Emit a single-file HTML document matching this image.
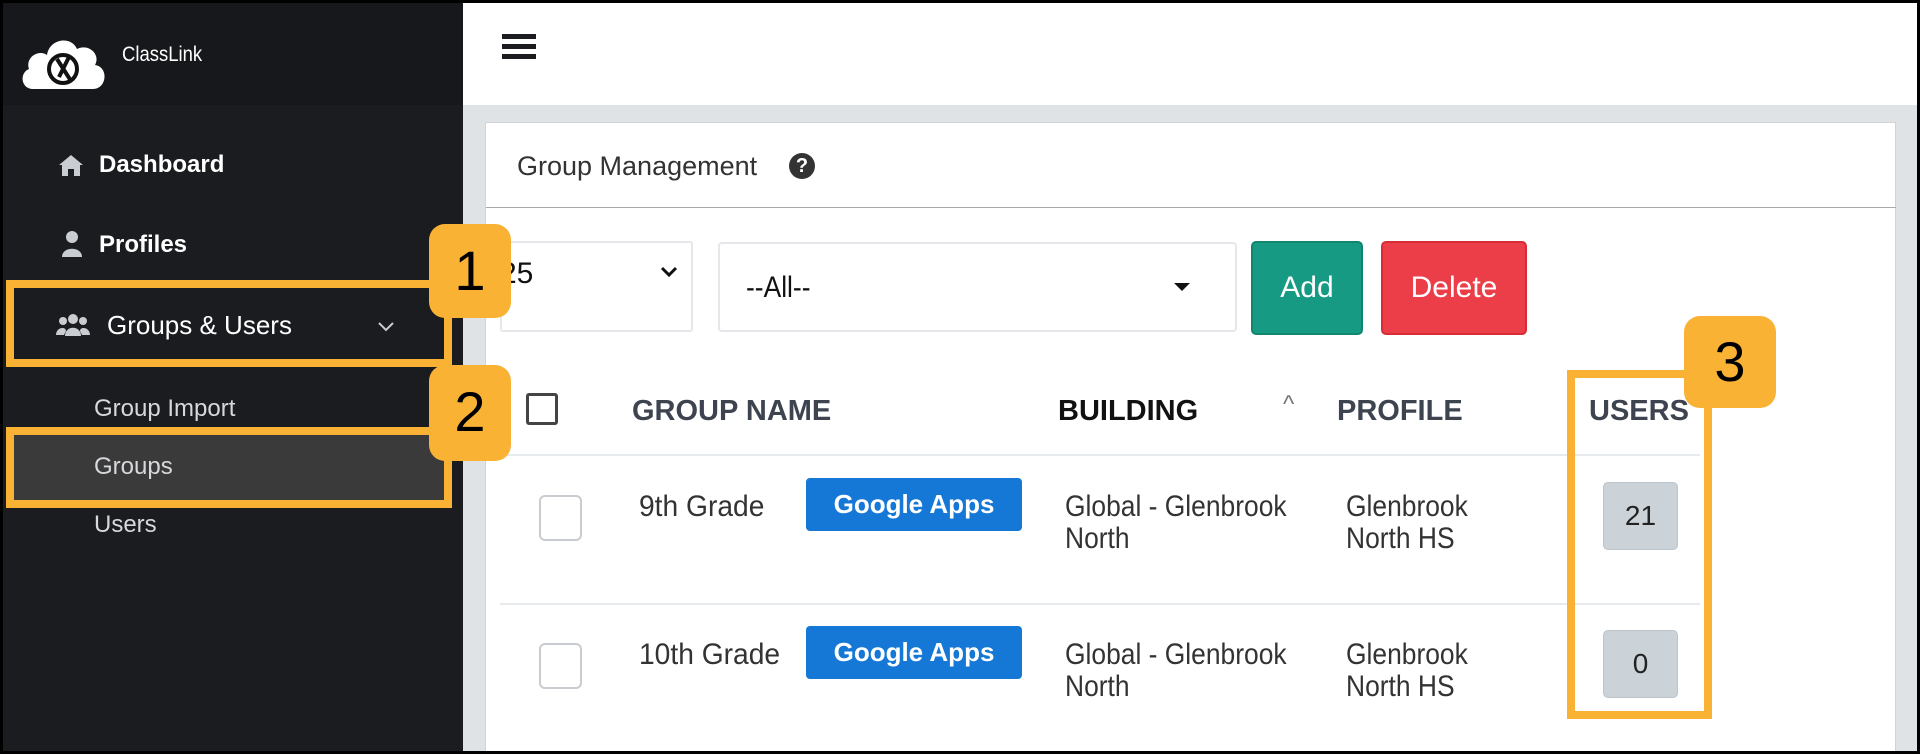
<!DOCTYPE html>
<html><head><meta charset="utf-8"><style>
*{margin:0;padding:0;box-sizing:border-box}
body{width:1920px;height:754px;overflow:hidden;background:#000;font-family:"Liberation Sans",sans-serif;position:relative}
.a{position:absolute}
.n{transform:scaleX(0.88);transform-origin:left top;white-space:nowrap}
#frame{position:absolute;left:3px;top:3px;width:1914px;height:748px;background:#dfe3e6;overflow:hidden}
.side{left:0;top:0;width:460px;height:748px;background:#1b1c20}
.logo{left:0;top:0;width:460px;height:102px;background:#17181c}
.nav{color:#fff;font-size:24px;font-weight:bold}
.sub{color:#d6d8dc;font-size:24px}
.lbl{background:#f9b233;border-radius:16px;color:#000;font-size:56px;text-align:center;line-height:94px}
.ob{border:8px solid #f9b233}
.th{color:#3d4450;font-size:29px;font-weight:bold;white-space:nowrap}
.cb{border:2px solid #c8ccd0;border-radius:6px;background:#fff}
.ga{background:#1578d6;color:#fff;font-size:26px;font-weight:bold;border-radius:4px;text-align:center;line-height:52px}
.tx{color:#333;font-size:30px;line-height:32px}
.ub{background:#ccd3d8;border:1px solid #bcc4ca;border-radius:5px;color:#222;font-size:26px;text-align:center}
</style></head><body>
<div id="frame">
<div class="a" style="left:460px;top:0;width:1460px;height:102px;background:#fff"></div>
<div class="a side"></div>
<div class="a logo"></div>
<svg class="a" style="left:16px;top:28px" width="92" height="62" viewBox="0 0 92 62"><path d="M14 58 C2 58 0 42 10 38 C6 26 20 18 28 24 C30 8 52 4 58 18 C70 12 82 24 76 34 C90 36 88 58 74 58 Z" fill="#fff"/><circle cx="44" cy="38" r="14" fill="none" stroke="#111" stroke-width="4"/><path d="M38 28 L52 50 M50 26 L40 46" stroke="#111" stroke-width="4"/></svg>
<div class="a n" style="left:119px;top:40px;color:#fff;font-size:21px">ClassLink</div>
<svg class="a" style="left:55px;top:150px" width="26" height="24" viewBox="0 0 26 24"><path d="M13 2 L1 12 L4 12 L4 23 L10 23 L10 16 L16 16 L16 23 L22 23 L22 12 L25 12 Z" fill="#c9ccd1"/></svg>
<div class="a nav" style="left:96px;top:148px">Dashboard</div>
<svg class="a" style="left:58px;top:227px" width="22" height="28" viewBox="0 0 22 28"><circle cx="11" cy="7" r="6" fill="#c9ccd1"/><path d="M1 27 C1 16 21 16 21 27 Z" fill="#c9ccd1"/></svg>
<div class="a nav" style="left:96px;top:228px">Profiles</div>
<div class="a ob" style="left:3px;top:277px;width:446px;height:87px"></div>
<svg class="a" style="left:53px;top:310px" width="34" height="24" viewBox="0 0 34 24"><circle cx="17" cy="6" r="5" fill="#c9ccd1"/><circle cx="7" cy="8" r="4" fill="#c9ccd1"/><circle cx="27" cy="8" r="4" fill="#c9ccd1"/><path d="M9 23 C9 12 25 12 25 23Z M0 22 C0 14 10 13 10 18 L8 22Z M34 22 C34 14 24 13 24 18 L26 22Z" fill="#c9ccd1"/></svg>
<div class="a" style="left:104px;top:307px;color:#fff;font-size:26px">Groups &amp; Users</div>
<svg class="a" style="left:374px;top:318px" width="18" height="12" viewBox="0 0 18 12"><path d="M2 2 L9 9 L16 2" stroke="#c9ccd1" stroke-width="2" fill="none"/></svg>
<div class="a sub" style="left:91px;top:392px">Group Import</div>
<div class="a ob" style="left:3px;top:424px;width:446px;height:81px;background:#3a3a3a"></div>
<div class="a sub" style="left:91px;top:450px">Groups</div>
<div class="a sub" style="left:91px;top:508px">Users</div>
<div class="a" style="left:499px;top:31px;width:34px;height:5px;background:#1b1c20;box-shadow:0 10px 0 #1b1c20,0 20px 0 #1b1c20"></div>
<div class="a" style="left:482px;top:119px;width:1411px;height:640px;background:#fff;border:1px solid #d0d4d8"></div>
<div class="a" style="left:483px;top:204px;width:1410px;height:1px;background:#aaa"></div>
<div class="a" style="left:514px;top:148px;color:#333;font-size:27px">Group Management</div>
<div class="a" style="left:786px;top:150px;width:26px;height:26px;border-radius:50%;background:#333;color:#fff;font-size:20px;font-weight:bold;text-align:center;line-height:26px">?</div>
<div class="a" style="left:497px;top:238px;width:193px;height:91px;border:2px solid #e5e7ea;border-radius:3px"></div>
<div class="a" style="left:497px;top:254px;font-size:30px;color:#111">25</div>
<svg class="a" style="left:656px;top:262px" width="20" height="14" viewBox="0 0 20 14"><path d="M3 3 L10 10 L17 3" stroke="#111" stroke-width="3" fill="none"/></svg>
<div class="a" style="left:715px;top:239px;width:519px;height:90px;border:2px solid #e5e7ea;border-radius:4px"></div>
<div class="a n" style="left:743px;top:268px;font-size:30px;color:#111">--All--</div>
<svg class="a" style="left:1169px;top:278px" width="20" height="12" viewBox="0 0 20 12"><path d="M2 2 L18 2 L10 10Z" fill="#111"/></svg>
<div class="a" style="left:1248px;top:238px;width:112px;height:94px;background:#179a84;border:2px solid #128470;border-radius:5px;color:#fff;font-size:30px;text-align:center;line-height:90px">Add</div>
<div class="a" style="left:1378px;top:238px;width:146px;height:94px;background:#ec3e48;border:2px solid #d72c36;border-radius:5px;color:#fff;font-size:30px;text-align:center;line-height:90px">Delete</div>
<div class="a" style="left:523px;top:390px;width:32px;height:32px;border:3px solid #444;border-radius:3px"></div>
<div class="a th" style="left:629px;top:392px">GROUP NAME</div>
<div class="a th" style="left:1055px;top:392px;color:#111">BUILDING</div>
<div class="a" style="left:1280px;top:388px;font-size:24px;color:#777">^</div>
<div class="a th" style="left:1334px;top:392px">PROFILE</div>
<div class="a th" style="left:1586px;top:392px">USERS</div>
<div class="a" style="left:497px;top:451px;width:1200px;height:2px;background:#e8ebee"></div>
<div class="a" style="left:497px;top:600px;width:1200px;height:2px;background:#e8ebee"></div>
<div class="a cb" style="left:536px;top:492px;width:43px;height:46px"></div>
<div class="a tx n" style="left:636px;top:488px;transform:scaleX(0.94)">9th Grade</div>
<div class="a ga" style="left:803px;top:475px;width:216px;height:53px">Google Apps</div>
<div class="a tx n" style="left:1062px;top:488px">Global - Glenbrook<br>North</div>
<div class="a tx n" style="left:1343px;top:488px">Glenbrook<br>North HS</div>
<div class="a ub" style="left:1600px;top:479px;width:75px;height:68px;line-height:66px;font-size:28px">21</div>
<div class="a cb" style="left:536px;top:640px;width:43px;height:46px"></div>
<div class="a tx n" style="left:636px;top:636px;transform:scaleX(0.94)">10th Grade</div>
<div class="a ga" style="left:803px;top:623px;width:216px;height:53px">Google Apps</div>
<div class="a tx n" style="left:1062px;top:636px">Global - Glenbrook<br>North</div>
<div class="a tx n" style="left:1343px;top:636px">Glenbrook<br>North HS</div>
<div class="a ub" style="left:1600px;top:627px;width:75px;height:68px;line-height:66px;font-size:28px">0</div>
<div class="a ob" style="left:1564px;top:367px;width:145px;height:349px"></div>
<div class="a lbl" style="left:1681px;top:313px;width:92px;height:92px;line-height:92px">3</div>
<div class="a lbl" style="left:426px;top:221px;width:82px;height:94px">1</div>
<div class="a lbl" style="left:426px;top:362px;width:82px;height:96px">2</div>
</div>
</body></html>
